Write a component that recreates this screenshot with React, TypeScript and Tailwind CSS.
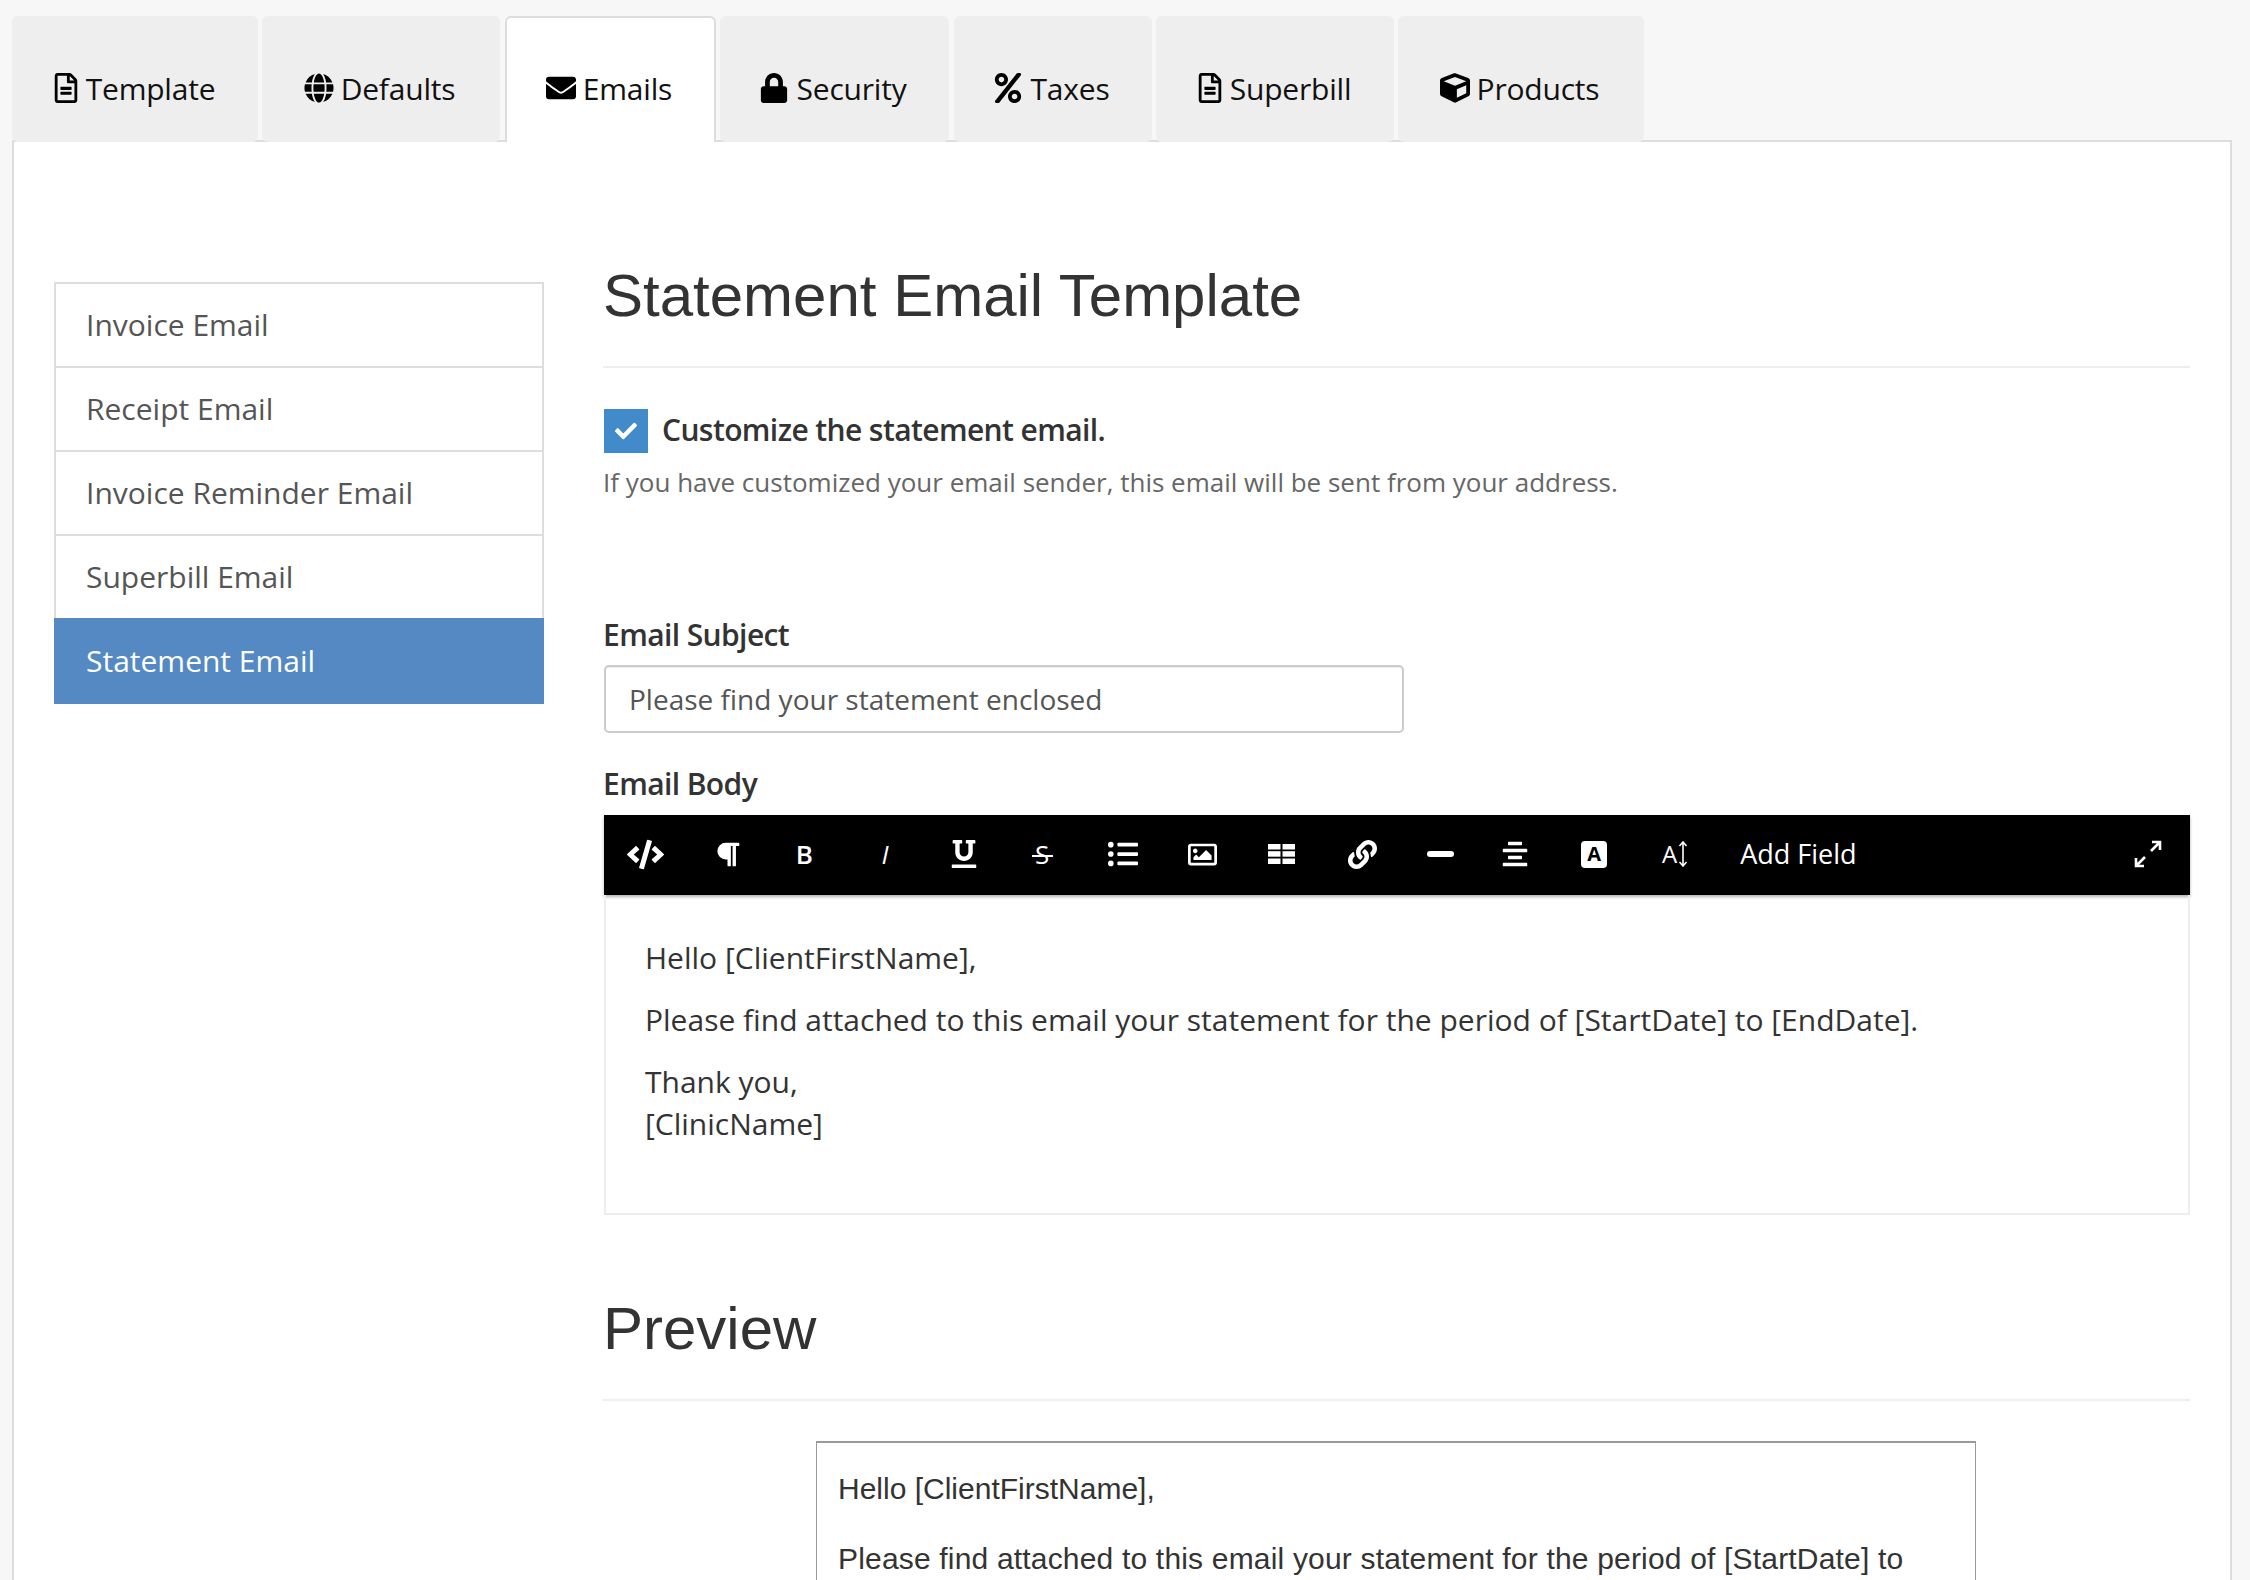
import React from "react";
import {
  FaRegFileAlt, FaGlobe, FaEnvelope, FaLock, FaPercent, FaCube, FaCode, FaParagraph, FaUnderline,
  FaListUl, FaRegImage, FaLink, FaAlignCenter, FaCheck,
} from "react-icons/fa";

const tabs = [
  { label: "Template", Icon: FaRegFileAlt, w: "w-[246px]", ml: "ml-0", ic: "-ml-[1px] -mr-[2px]" },
  { label: "Defaults", Icon: FaGlobe, w: "w-[238px]", ml: "ml-[4px]", ic: "" },
  { label: "Emails", Icon: FaEnvelope, w: "w-[211px]", ml: "ml-[5px]", ic: "", active: true },
  { label: "Security", Icon: FaLock, w: "w-[229px]", ml: "ml-[4px]", ic: "" },
  { label: "Taxes", Icon: FaPercent, w: "w-[198px]", ml: "ml-[5px]", ic: "" },
  { label: "Superbill", Icon: FaRegFileAlt, w: "w-[238px]", ml: "ml-[4px]", ic: "-ml-[1px] -mr-[2px]" },
  { label: "Products", Icon: FaCube, w: "w-[246px]", ml: "ml-[4px]", ic: "" },
];

const side = [
  { s: "Invoice Email", c: "h-[86px] border-t-2 border-b-2" },
  { s: "Receipt Email", c: "h-[84px] border-b-2" },
  { s: "Invoice Reminder Email", c: "h-[84px] border-b-2" },
  { s: "Superbill Email", c: "h-[82px]" },
];

function Tool({ children, cls = "" }: { children: React.ReactNode; cls?: string }) {
  return <div className={`relative flex h-[40px] w-[79.3px] items-center justify-center ${cls}`}>{children}</div>;
}

export default function App() {
  return (
    <div className="h-[1580px] w-[2250px] overflow-hidden bg-[#f7f7f7] font-['Open_Sans',sans-serif] text-[#333]">
      <div className="flex h-[142px] items-end pl-[12px] pt-[16px]">
        {tabs.map(({ label, Icon, w, ml, ic, active }) => (
          <div
            key={label}
            className={`${w} ${ml} relative z-10 flex h-[126px] items-center justify-center gap-[7px] pr-[3px] text-[30px] text-[#111] ${
              active ? "rounded-t-[6px] border-2 border-b-0 border-[#ddd] bg-white pt-[16px]" : "rounded-[6px] bg-[#eee] pt-[18px]"
            }`}
          >
            <Icon size={30} color="#000" className={ic} />
            <span className="tracking-[-0.2px]">{label}</span>
          </div>
        ))}
      </div>
      <div className="-mt-[2px] ml-[12px] mr-[18px] flex h-[1500px] items-start border-2 border-[#ddd] bg-white pl-[40px] pr-[40px]">
        <div className="mt-[140px] flex w-[490px] shrink-0 flex-col">
          {side.map(({ s, c }) => (
            <div key={s} className={`flex items-center border-x-2 border-[#ddd] pb-[2px] pl-[30px] text-[30px] text-[#555] ${c}`}>
              {s}
            </div>
          ))}
          <div className="flex h-[86px] items-center bg-[#5589c3] pb-[2px] pl-[32px] text-[30px] text-white">Statement Email</div>
        </div>
        <div className="ml-[60px] flex-1">
          <h1 className="-ml-[1px] mt-[115px] border-b-2 border-[#eee] pb-[31px] pl-0 font-['Liberation_Sans',sans-serif] text-[60px] leading-[78px] text-[#333]">
            Statement Email Template
          </h1>
          <div className="mt-[41px] flex items-center">
            <div className="flex h-[44px] w-[44px] items-center justify-center bg-[#428bca]">
              <FaCheck size={22} color="#fff" />
            </div>
            <span className="ml-[14px] pb-[3px] text-[30px] font-semibold leading-[41px] tracking-[-0.6px]">Customize the statement email.</span>
          </div>
          <p className="-ml-[1px] mt-[9px] text-[26px] leading-[40px] text-[#666]">If you have customized your email sender, this email will be sent from your address.</p>
          <label className="-ml-[1px] mt-[112px] block text-[30px] font-semibold leading-[42px] tracking-[-0.6px]">Email Subject</label>
          <div className="mt-[9px] flex h-[68px] w-[800px] items-center rounded-[5px] border-2 border-[#ccc] pl-[23px] text-[28px] text-[#555] shadow-[inset_0_1px_1px_rgba(0,0,0,0.075)]">
            Please find your statement enclosed
          </div>
          <label className="-ml-[1px] mt-[30px] block text-[30px] font-semibold leading-[42px] tracking-[-0.6px]">Email Body</label>
          <div className="mt-[10px] flex h-[80px] items-center bg-black pb-[2px] pl-[2px] pr-[28px] text-white shadow-[0_2px_3px_rgba(0,0,0,0.3)]">
            <Tool><FaCode size={37} color="#fff" /></Tool>
            <Tool><span className="ml-[5px] flex"><FaParagraph size={27} color="#fff" /></span></Tool>
            <Tool><span className="text-[26px] font-semibold leading-none">B</span></Tool>
            <Tool cls="pl-[3px]"><span className="text-[26px] italic leading-none">I</span></Tool>
            <Tool cls="pl-[3px]"><FaUnderline size={28} color="#fff" /></Tool>
            <Tool>
              <span className="text-[26px] leading-none">S</span>
              <span className="absolute left-[30px] top-[21px] h-[2px] w-[21px] bg-white" />
            </Tool>
            <Tool cls="pl-[3px]"><FaListUl size={30} color="#fff" /></Tool>
            <Tool cls="pl-[3px]"><FaRegImage size={29} color="#fff" /></Tool>
            <Tool cls="pl-[3px]">
              <svg width="27" height="20" viewBox="0 0 27 20" fill="#fff">
                <rect x="0" y="0" width="12.5" height="5.5" />
                <rect x="14.5" y="0" width="12.5" height="5.5" />
                <rect x="0" y="7.2" width="12.5" height="5.5" />
                <rect x="14.5" y="7.2" width="12.5" height="5.5" />
                <rect x="0" y="14.5" width="12.5" height="5.5" />
                <rect x="14.5" y="14.5" width="12.5" height="5.5" />
              </svg>
            </Tool>
            <Tool cls="pl-[6px]"><FaLink size={29} color="#fff" /></Tool>
            <Tool cls="pl-[3px]"><span className="h-[6px] w-[27px] rounded-[3px] bg-white" /></Tool>
            <Tool cls="pr-[6px]"><FaAlignCenter size={28} color="#fff" /></Tool>
            <Tool cls="pr-[6px]">
              <span className="flex h-[27px] w-[26px] items-center justify-center rounded-[4px] bg-white text-[20px] font-bold leading-none text-black">A</span>
            </Tool>
            <Tool cls="pr-[3px]">
              <span className="text-[24px] leading-none">A</span>
              <svg className="ml-[1px]" width="10" height="26" viewBox="0 0 10 26" fill="none" stroke="#fff" strokeWidth="1.6">
                <path d="M5 1v24M1.5 5 5 1l3.5 4M1.5 21 5 25l3.5-4" />
              </svg>
            </Tool>
            <span className="ml-[24px] text-[27px]">Add Field</span>
            <svg className="ml-auto" width="28" height="28" viewBox="0 0 28 28" fill="none" stroke="#fff" strokeWidth="2.6">
              <path d="M17 11 25 3M18 2h8v8M11 17l-8 8M2 18v8h8" />
            </svg>
          </div>
          <div className="h-[320px] border-x-2 border-b-2 border-[#eee] pl-[39px] pt-[42px] text-[30px] leading-[42px] text-[#333]">
            <p>Hello [ClientFirstName],</p>
            <p className="mt-[20px]">Please find attached to this email your statement for the period of [StartDate] to [EndDate].</p>
            <p className="mt-[20px]">Thank you,<br />[ClinicName]</p>
          </div>
          <h1 className="-ml-[1px] mt-[75px] border-b-2 border-[#eee] pb-[31px] font-['Liberation_Sans',sans-serif] text-[60px] leading-[78px] text-[#333]">Preview</h1>
          <div className="ml-[212px] mt-[40px] h-[300px] w-[1160px] border border-t-2 border-[#999] px-[21px] pt-[25px] font-['Liberation_Sans',sans-serif] text-[30px] leading-[42px] text-[#333]">
            <p>Hello [ClientFirstName],</p>
            <p className="mt-[28px] tracking-[0.18px]">Please find attached to this email your statement for the period of [StartDate] to [EndDate].</p>
          </div>
        </div>
      </div>
    </div>
  );
}
